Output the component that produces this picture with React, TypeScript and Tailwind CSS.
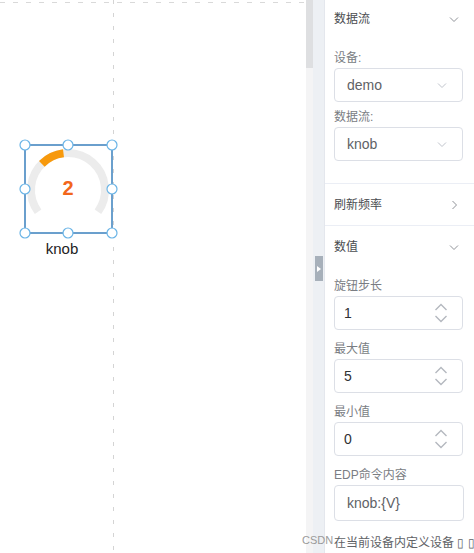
import React from 'react';

const ChevronDown = ({ className = '' }: { className?: string }) => (
  <svg viewBox="0 0 12 12" className={className} fill="none" stroke="currentColor" strokeWidth="1">
    <path d="M2 4.5 L6 8.5 L10 4.5" />
  </svg>
);

const ChevronRight = ({ className = '' }: { className?: string }) => (
  <svg viewBox="0 0 12 12" className={className} fill="none" stroke="currentColor" strokeWidth="1">
    <path d="M4.5 2 L8.5 6 L4.5 10" />
  </svg>
);

const SelectBox = ({ value }: { value: string }) => (
  <div className="h-[34px] w-[129px] rounded-[4px] border border-[#dcdfe6] flex items-center justify-between pl-[12px] pr-[14px]">
    <span className="text-[14px] text-[#606266]">{value}</span>
    <ChevronDown className="w-[12px] h-[12px] text-[#c0c4cc]" />
  </div>
);

const NumberBox = ({ value }: { value: string }) => (
  <div className="h-[34px] w-[129px] rounded-[4px] border border-[#dcdfe6] flex items-center justify-between pl-[9px] pr-[14px]">
    <span className="text-[14px] text-[#303133]">{value}</span>
    <div className="flex flex-col text-[#b4b8bf]">
      <svg viewBox="0 0 14 8" className="w-[14px] h-[8px]" fill="none" stroke="currentColor" strokeWidth="1.4">
        <path d="M1.5 7 L7 1.5 L12.5 7" />
      </svg>
      <div className="h-[4px]" />
      <svg viewBox="0 0 14 8" className="w-[14px] h-[8px]" fill="none" stroke="currentColor" strokeWidth="1.4">
        <path d="M1.5 1 L7 6.5 L12.5 1" />
      </svg>
    </div>
  </div>
);

const Field = ({ label, children }: { label: string; children: React.ReactNode }) => (
  <div className="flex flex-col">
    <div className="h-[20px] flex items-center text-[12px] text-[#7a7d83]">{label}</div>
    {children}
  </div>
);

const handles: [number, number][] = [
  [25, 145], [68, 145], [112, 145],
  [25, 189], [112, 189],
  [25, 233], [68, 233], [112, 233],
];

const App: React.FC = () => {
  return (
    <div className="relative w-[474px] h-[553px] flex overflow-hidden bg-white font-['Liberation_Sans','Noto_Sans_CJK_SC',sans-serif]">
      {/* Canvas */}
      <div className="relative w-[306px] shrink-0 h-full bg-white">
        <svg className="absolute left-0 top-0" width="306" height="553">
          <line x1="0" y1="2.5" x2="306" y2="2.5" stroke="#d9d9d9" strokeWidth="1" strokeDasharray="5 8" />
          <line x1="113.5" y1="0" x2="113.5" y2="553" stroke="#d4d4d4" strokeWidth="1" strokeDasharray="4 9" />
          <path d="M38.07 211.75 A37 37 0 1 1 97.93 211.75" fill="none" stroke="#ececec" strokeWidth="8" />
          <path d="M41.84 163.84 A37 37 0 0 1 63.49 153.28" fill="none" stroke="#f7990c" strokeWidth="8" />
          <rect x="25" y="145" width="87" height="88" fill="none" stroke="#3a80bd" strokeWidth="1.5" />
          {handles.map(([x, y]) => (
            <circle key={`${x}-${y}`} cx={x} cy={y} r="5" fill="#ffffff" stroke="#6ab4e6" strokeWidth="1.2" />
          ))}
        </svg>
        <div className="absolute left-[48px] top-[176px] w-[40px] text-center text-[20px] leading-[24px] font-bold text-[#f2661b]">2</div>
        <div className="absolute left-[32px] top-[239px] w-[60px] text-center text-[15px] leading-[20px] text-[#222]">knob</div>
      </div>

      {/* Scrollbar */}
      <div className="w-[7px] shrink-0 h-full bg-[#f4f4f5] flex flex-col">
        <div className="h-[68px] bg-[#dedfe1]" />
      </div>

      {/* Toggle strip */}
      <div className="w-[11px] shrink-0 h-full bg-[#edf0f4] flex flex-col pt-[256px] pl-[2px]">
        <div className="w-[8px] h-[25px] bg-[#a7b0ba] flex items-center justify-center">
          <svg viewBox="0 0 4 6" className="w-[4px] h-[6px]">
            <path d="M0 0 L4 3 L0 6 Z" fill="#ffffff" />
          </svg>
        </div>
      </div>

      {/* Panel */}
      <div className="flex-1 min-w-0 overflow-hidden h-full border-l border-[#e4e7ed] bg-white">
        <div className="pl-[9px] pr-[12px]">
          <div className="h-[37px] flex items-center justify-between">
            <span className="text-[12px] text-[#4a4c50]">数据流</span>
            <ChevronDown className="w-[12px] h-[12px] text-[#909399] mr-[2px]" />
          </div>
          <div className="mt-[11px] flex flex-col gap-[5px]">
            <Field label="设备:"><SelectBox value="demo" /></Field>
            <Field label="数据流:"><SelectBox value="knob" /></Field>
          </div>
          <div className="h-[22px]" />
        </div>
        <div className="border-t border-[#ebeef5]" />
        <div className="pl-[9px] pr-[12px] h-[41px] flex items-center justify-between">
          <span className="text-[12px] text-[#4a4c50]">刷新频率</span>
          <ChevronRight className="w-[12px] h-[12px] text-[#909399] mr-[2px]" />
        </div>
        <div className="border-t border-[#ebeef5]" />
        <div className="pl-[9px] pr-[12px]">
          <div className="h-[41px] flex items-center justify-between">
            <span className="text-[12px] text-[#4a4c50]">数值</span>
            <ChevronDown className="w-[12px] h-[12px] text-[#909399] mr-[2px]" />
          </div>
          <div className="mt-[9px] flex flex-col gap-[9px]">
            <Field label="旋钮步长"><NumberBox value="1" /></Field>
            <Field label="最大值"><NumberBox value="5" /></Field>
            <Field label="最小值"><NumberBox value="0" /></Field>
            <Field label="EDP命令内容">
              <div className="h-[36px] w-[130px] rounded-[4px] border border-[#dcdfe6] flex items-center pl-[12px]">
                <span className="text-[14px] text-[#606266]">knob:{'{V}'}</span>
              </div>
            </Field>
          </div>
          <div className="mt-[12px] h-[20px] flex items-center text-[12px] text-[#606266] whitespace-nowrap">在当前设备内定义设备 ▯ ▯</div>
        </div>
      </div>

      {/* Watermark */}
      <div className="absolute left-[302px] top-[532px] text-[11px] leading-[16px] text-[#9a9a9a] whitespace-nowrap">
        CSDN
      </div>
    </div>
  );
};

export default App;
